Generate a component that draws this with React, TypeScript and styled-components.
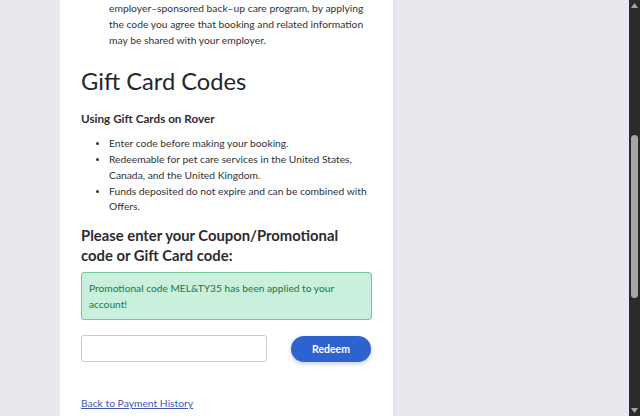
import { useEffect, useRef } from 'react';
import { styled, createGlobalStyle } from 'styled-components';

const GlobalStyle = createGlobalStyle`
  html, body {
    margin: 0;
    padding: 0;
  }
  body {
    font-family: 'Lato', 'Noto Sans', sans-serif;
    color: #2e2e33;
  }
`;

const Frame = styled.div`
  position: relative;
  height: 416px;
  overflow: hidden;
`;

const Viewport = styled.div`
  height: 416px;
  overflow-y: scroll;
  background: #e8e8ef;
  scrollbar-width: none;

  &::-webkit-scrollbar {
    display: none;
  }
`;

// drawn scrollbar, sits over the right edge of the viewport
const ScrollTrack = styled.div`
  position: absolute;
  top: 0;
  right: 0;
  bottom: 0;
  width: 11px;
  background: #2b2b2b;
  display: flex;
  flex-direction: column;
  align-items: center;
  justify-content: space-between;
  padding: 3px 0;
  box-sizing: border-box;
`;

const ScrollThumb = styled.div`
  position: absolute;
  left: 2px;
  width: 7px;
  border-radius: 4px;
  background: #a6a6a6;
`;

const Page = styled.div`
  padding: 0 0 0 60px;
`;

const Card = styled.main`
  width: 333px;
  box-sizing: border-box;
  background: #fff;
  padding: 24px 21px 240px;
  box-shadow: 1px 0 2px rgba(0, 0, 0, 0.06);
`;

const Heading = styled.h2`
  margin: 18px 0 0;
  font-size: 23.7px;
  line-height: 30px;
  font-weight: 400;
  color: #26262b;
`;

const SubHeading = styled.h3`
  margin: 14px 0 0;
  font-size: 11.7px;
  line-height: 16px;
  font-weight: 700;
  color: #2e2e33;
`;

const BulletList = styled.ul`
  margin: 10px 0 0;
  padding: 0 0 0 28px;
  list-style: disc;
`;

const Bullet = styled.li`
  font-size: 10.3px;
  line-height: 15.75px;
  color: #323237;

  &::marker {
    font-size: 9px;
  }
`;

const Prompt = styled.h3`
  margin: 10px 0 0;
  font-size: 14.8px;
  line-height: 20px;
  font-weight: 700;
  color: #2b2b30;
`;

const Notice = styled.div`
  margin-top: 7px;
  padding: 7px;
  border: 1px solid #74c79b;
  border-radius: 3px;
  background: #c8f0dc;
  color: #1d7549;
  font-size: 10.2px;
  line-height: 16px;
`;

const RedeemRow = styled.form`
  display: flex;
  align-items: center;
  justify-content: space-between;
  margin-top: 15px;
  padding-right: 1px;
`;

const CodeInput = styled.input`
  width: 186px;
  height: 27px;
  box-sizing: border-box;
  border: 1px solid #c9c9cf;
  border-radius: 3px;
  background: #fff;
  outline: none;
`;

const RedeemButton = styled.button`
  width: 80px;
  height: 26px;
  border: none;
  border-radius: 13px;
  background: #2d62cf;
  color: #fff;
  font-family: inherit;
  font-size: 10.5px;
  font-weight: 700;
  box-shadow: 0 2px 4px rgba(30, 60, 140, 0.25);
  cursor: pointer;
`;

const BackLink = styled.a`
  display: inline-block;
  margin-top: 33px;
  font-size: 10.3px;
  line-height: 16px;
  color: #3a5cae;
  text-decoration: underline;
`;

const Arrow = ({ down }: { down?: boolean }) => (
  <svg width="7" height="5" viewBox="0 0 7 5">
    <path d={down ? 'M0 0 L7 0 L3.5 5 Z' : 'M3.5 0 L7 5 L0 5 Z'} fill="#a6a6a6" />
  </svg>
);

const App = () => {
  const viewRef = useRef<HTMLDivElement>(null);
  const headingRef = useRef<HTMLHeadingElement>(null);

  useEffect(() => {
    const view = viewRef.current;
    const heading = headingRef.current;
    if (view && heading) {
      view.scrollTop = heading.offsetTop - view.offsetTop - 66;
    }
  }, []);

  return (
    <>
      <GlobalStyle />
      <Frame>
        <Viewport ref={viewRef}>
          <Page>
            <Card>
              <Heading>Promo Codes</Heading>
              <SubHeading>Using Promo Codes on Rover</SubHeading>
              <BulletList>
                <Bullet>Promo codes apply to the first booking made after the code is entered.</Bullet>
                <Bullet>Only one promo code can be applied to each booking.</Bullet>
                <Bullet>
                  If this is a code provided through an
                  <br />
                  employer–sponsored back–up care program, by applying
                  <br />
                  the code you agree that booking and related information
                  <br />
                  may be shared with your employer.
                </Bullet>
              </BulletList>

              <Heading ref={headingRef}>Gift Card Codes</Heading>
              <SubHeading>Using Gift Cards on Rover</SubHeading>
              <BulletList>
                <Bullet>Enter code before making your booking.</Bullet>
                <Bullet>Redeemable for pet care services in the United States, Canada, and the United Kingdom.</Bullet>
                <Bullet>Funds deposited do not expire and can be combined with Offers.</Bullet>
              </BulletList>

              <Prompt>Please enter your Coupon/Promotional code or Gift Card code:</Prompt>
              <Notice>Promotional code MEL&amp;TY35 has been applied to your account!</Notice>

              <RedeemRow onSubmit={(e) => e.preventDefault()}>
                <CodeInput type="text" aria-label="Code" />
                <RedeemButton type="submit">Redeem</RedeemButton>
              </RedeemRow>

              <BackLink href="#">Back to Payment History</BackLink>
            </Card>
          </Page>
        </Viewport>
        <ScrollTrack>
          <Arrow />
          <Arrow down />
          <ScrollThumb style={{ top: 135, height: 163 }} />
        </ScrollTrack>
      </Frame>
    </>
  );
};

export default App;
